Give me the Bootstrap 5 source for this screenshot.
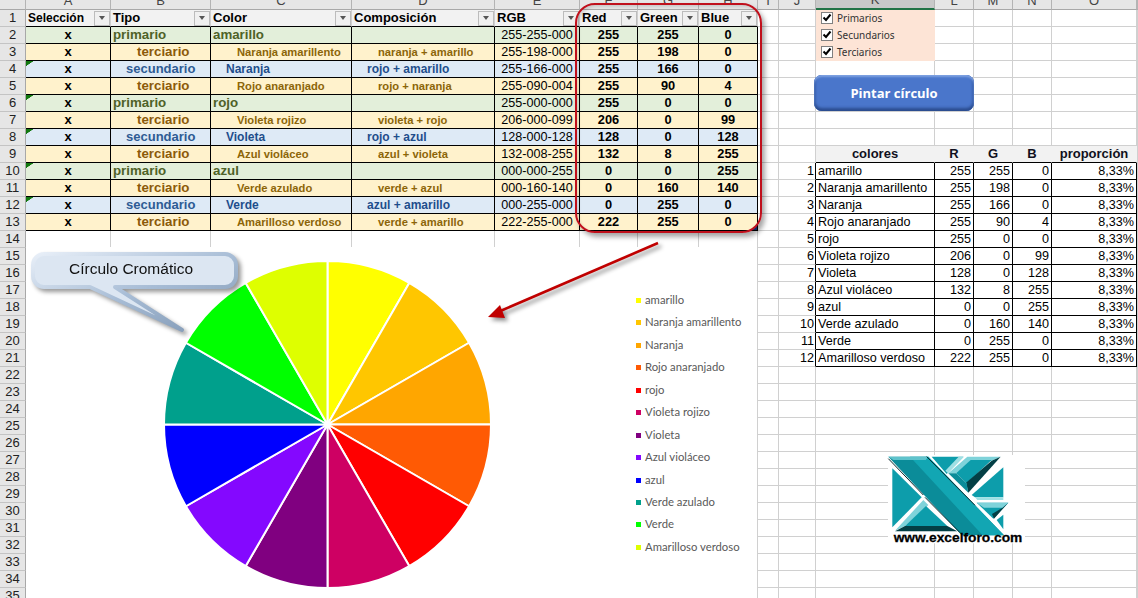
<!DOCTYPE html>
<html lang="es">
<head>
<meta charset="utf-8">
<title>Círculo Cromático</title>
<link href="https://cdn.jsdelivr.net/npm/bootstrap@5.3.0/dist/css/bootstrap.min.css" rel="stylesheet">
<style>
html,body{margin:0;background:#fff;overflow:hidden}
.xl-stage{position:relative;width:1138px;height:598px;overflow:hidden;font-family:"Liberation Sans",Arial,sans-serif;font-size:12.6px;color:#000}
.xl-sheet{table-layout:fixed;width:1138px;margin-top:-8px;border-collapse:separate;border-spacing:0}
.xl-sheet th,.xl-sheet td{height:17px;padding:0 2px;line-height:16px;white-space:nowrap;overflow:hidden;border-right:1px solid #d0d0d0;border-bottom:1px solid #d0d0d0;font-weight:400}
.xl-sheet thead th{background:#e6e6e6;text-align:center;color:#444;border-right-color:#b4b4b4;border-bottom-color:#a8a8a8;font-size:13px}
.xl-sheet thead th.xl-sel{background:#c9c9c9;border-bottom:2px solid #217346}
.xl-sheet tbody th{background:#e6e6e6;text-align:center;color:#222;border-right-color:#a8a8a8;border-bottom-color:#c4c4c4;padding:0;font-size:13px}
.xl-sheet td.xl-head{background:#f2f2f2;font-size:13px;font-weight:700;border-bottom-color:#000;border-right-color:#cfcfcf;padding:0 0 0 2px}
.xl-sheet td.xl-head.xl-tight{font-size:12px}
.xl-filt{display:inline-flex;align-items:center;justify-content:center;width:16px;height:15px;background:#f0f0f0;border:1px solid #bcbcbc;flex:none}
.xl-filt::after{content:"";border:3.5px solid transparent;border-top:4px solid #555;border-bottom:0}
.xl-sheet td.xl-b{border-right-color:#000;border-bottom-color:#000}
.xl-prim{background:#e3efda}
.xl-sec{background:#deeaf6}
.xl-ter{background:#fff2cc}
.xl-sheet td.xl-a{font-weight:700;text-align:center;font-size:13px}
.xl-sheet td.xl-num{text-align:center;font-weight:700;font-size:12.8px}
.xl-sheet td.xl-t{font-weight:700}
.xl-sheet td.xl-c{font-weight:700}
.xl-prim.xl-t{color:#4f6228;font-size:13.3px}
.xl-sec.xl-t{color:#2e5b94;font-size:13px}
.xl-ter.xl-t{color:#8c5a09;font-size:13.3px}
.xl-sec.xl-c{color:#1f4e8c;font-size:12px}
.xl-ter.xl-c{color:#8c6508;font-size:11.2px}
.xl-sheet td.xl-i1{padding-left:15px}
.xl-sheet td.xl-i2{padding-left:27px}
.xl-sheet td.xl-ter.xl-i2{padding-left:26px}
.xl-err{background-image:linear-gradient(146deg,#12780f 4px,transparent 4.5px)}
.xl-corner{background-image:linear-gradient(315deg,#1f3a93 3px,transparent 3px)}
.xl-sheet td.xl-peach{background:#fde4d6;border-color:#fde4d6;padding:0 0 0 5px;vertical-align:top;font-family:"Noto Sans",sans-serif;font-size:10px;color:#333}
.xl-peach>div{height:14px;margin-top:1px}
.xl-check.form-check-input{width:12px;height:12px;margin:0;border:1px solid #808080;border-radius:0;background-color:#fff;box-shadow:none;flex:none}
.xl-check.form-check-input:checked{background-color:#fff;border-color:#808080;background-image:url("data:image/svg+xml,%3csvg xmlns='http://www.w3.org/2000/svg' viewBox='0 0 12 12'%3e%3cpath fill='none' stroke='%23000' stroke-width='2' d='M2.5 5.5l2.5 2.5 4.5-5.5'/%3e%3c/svg%3e");background-size:12px 12px}
.xl-sheet td.xl-band{background:#f2f2f2;font-weight:700;text-align:center;border-right-color:#f2f2f2;border-bottom-color:#000;color:#101020;font-size:13px;padding:0}
.xl-sheet td.xl-idx{text-align:right;border-right-color:#000;padding-right:1px}
.xl-sheet td.xl-cell{border-right-color:#000;border-bottom-color:#000}
.xl-sheet td.xl-cell.xl-r{text-align:right}
.xl-frame{position:absolute;left:575px;top:3px;width:187px;height:230px;border:2px solid #c0101c;border-radius:20px;box-shadow:3px 4px 5px rgba(0,0,0,.35),inset 2px 2px 3px rgba(0,0,0,.12)}
.xl-arrow{position:absolute;left:480px;top:235px;filter:drop-shadow(3px 3px 2px rgba(0,0,0,.45))}
.xl-paint.btn{position:absolute;left:814px;top:75px;width:160px;height:36px;padding:0;border:0;border-radius:8px;background:#4a76cb;color:#fff;font:700 13px "Open Sans",sans-serif;box-shadow:inset 0 2px 2px #7fa2e2,inset 0 -3px 3px #2b4c8f,inset 2px 0 2px #3f68b6,inset -2px 0 2px #3f68b6}
.xl-chart{position:absolute;left:26px;top:247px;width:731px;height:351px;background:#fff}
.xl-pie{margin:14px 0 0 138px;flex:none}
.xl-legend{margin:42px 0 0 145px;font-family:Lato,sans-serif;font-size:11.3px;color:#595959}
.xl-legend li{height:22.45px;line-height:22.45px;white-space:nowrap}
.xl-dot{display:inline-block;width:5px;height:5px;margin-right:4px;vertical-align:1px}
.xl-callout{position:absolute;left:0;top:-1px;filter:drop-shadow(3px 3px 2px rgba(0,0,0,.4))}
.xl-callout text{font-family:"Liberation Sans",sans-serif;font-size:15.5px;fill:#111}
.xl-logo{position:absolute;left:860px;top:440px}
.xl-logo text{font-family:"Liberation Sans",sans-serif;font-weight:700;font-size:38.5px;fill:#000;stroke:#000;stroke-width:.8}
</style>
</head>
<body>
<div class="xl-stage">
<table class="xl-sheet">
<colgroup><col style="width:26px"><col style="width:85px"><col style="width:100px"><col style="width:141px"><col style="width:143px"><col style="width:85px"><col style="width:58px"><col style="width:61px"><col style="width:59px"><col style="width:21px"><col style="width:37px"><col style="width:119px"><col style="width:39px"><col style="width:39px"><col style="width:39px"><col style="width:85px"><col style="width:1px"></colgroup>
<thead><tr><th></th><th>A</th><th>B</th><th>C</th><th>D</th><th>E</th><th>F</th><th>G</th><th>H</th><th>I</th><th>J</th><th class="xl-sel">K</th><th>L</th><th>M</th><th>N</th><th>O</th><th></th></tr></thead>
<tbody>
<tr><th>1</th>
<td class="xl-head xl-tight"><div class="d-flex justify-content-between align-items-center">Selección<span class="xl-filt"></span></div></td>
<td class="xl-head"><div class="d-flex justify-content-between align-items-center">Tipo<span class="xl-filt"></span></div></td>
<td class="xl-head"><div class="d-flex justify-content-between align-items-center">Color<span class="xl-filt"></span></div></td>
<td class="xl-head"><div class="d-flex justify-content-between align-items-center">Composición<span class="xl-filt"></span></div></td>
<td class="xl-head"><div class="d-flex justify-content-between align-items-center">RGB<span class="xl-filt"></span></div></td>
<td class="xl-head"><div class="d-flex justify-content-between align-items-center">Red<span class="xl-filt"></span></div></td>
<td class="xl-head"><div class="d-flex justify-content-between align-items-center">Green<span class="xl-filt"></span></div></td>
<td class="xl-head"><div class="d-flex justify-content-between align-items-center">Blue<span class="xl-filt"></span></div></td>
<td></td><td></td>
<td class="xl-peach"><div class="d-flex align-items-center gap-1"><input class="form-check-input xl-check" type="checkbox" checked aria-label="Primarios">Primarios</div></td>
<td></td><td></td><td></td><td></td><td></td></tr>
<tr><th>2</th><td class="xl-b xl-prim xl-a">x</td><td class="xl-b xl-prim xl-t">primario</td><td class="xl-b xl-prim xl-t">amarillo</td><td class="xl-b xl-prim"></td><td class="xl-b xl-prim text-center">255-255-000</td><td class="xl-b xl-prim xl-num">255</td><td class="xl-b xl-prim xl-num">255</td><td class="xl-b xl-prim xl-num">0</td><td></td><td></td>
<td class="xl-peach"><div class="d-flex align-items-center gap-1"><input class="form-check-input xl-check" type="checkbox" checked aria-label="Secundarios">Secundarios</div></td>
<td></td><td></td><td></td><td></td><td></td></tr>
<tr><th>3</th><td class="xl-b xl-ter xl-a">x</td><td class="xl-b xl-ter xl-t xl-i2">terciario</td><td class="xl-b xl-ter xl-c xl-i2">Naranja amarillento</td><td class="xl-b xl-ter xl-c xl-i2">naranja + amarillo</td><td class="xl-b xl-ter text-center">255-198-000</td><td class="xl-b xl-ter xl-num">255</td><td class="xl-b xl-ter xl-num">198</td><td class="xl-b xl-ter xl-num">0</td><td></td><td></td>
<td class="xl-peach"><div class="d-flex align-items-center gap-1"><input class="form-check-input xl-check" type="checkbox" checked aria-label="Terciarios">Terciarios</div></td>
<td></td><td></td><td></td><td></td><td></td></tr>
<tr><th>4</th><td class="xl-b xl-sec xl-a xl-err">x</td><td class="xl-b xl-sec xl-t xl-i1">secundario</td><td class="xl-b xl-sec xl-c xl-i1">Naranja</td><td class="xl-b xl-sec xl-c xl-i1">rojo + amarillo</td><td class="xl-b xl-sec text-center">255-166-000</td><td class="xl-b xl-sec xl-num">255</td><td class="xl-b xl-sec xl-num">166</td><td class="xl-b xl-sec xl-num">0</td><td></td><td></td><td></td><td></td><td></td><td></td><td></td><td></td></tr>
<tr><th>5</th><td class="xl-b xl-ter xl-a">x</td><td class="xl-b xl-ter xl-t xl-i2">terciario</td><td class="xl-b xl-ter xl-c xl-i2">Rojo anaranjado</td><td class="xl-b xl-ter xl-c xl-i2">rojo + naranja</td><td class="xl-b xl-ter text-center">255-090-004</td><td class="xl-b xl-ter xl-num">255</td><td class="xl-b xl-ter xl-num">90</td><td class="xl-b xl-ter xl-num">4</td><td></td><td></td><td></td><td></td><td></td><td></td><td></td><td></td></tr>
<tr><th>6</th><td class="xl-b xl-prim xl-a xl-err">x</td><td class="xl-b xl-prim xl-t">primario</td><td class="xl-b xl-prim xl-t">rojo</td><td class="xl-b xl-prim"></td><td class="xl-b xl-prim text-center">255-000-000</td><td class="xl-b xl-prim xl-num">255</td><td class="xl-b xl-prim xl-num">0</td><td class="xl-b xl-prim xl-num">0</td><td></td><td></td><td></td><td></td><td></td><td></td><td></td><td></td></tr>
<tr><th>7</th><td class="xl-b xl-ter xl-a">x</td><td class="xl-b xl-ter xl-t xl-i2">terciario</td><td class="xl-b xl-ter xl-c xl-i2">Violeta rojizo</td><td class="xl-b xl-ter xl-c xl-i2">violeta + rojo</td><td class="xl-b xl-ter text-center">206-000-099</td><td class="xl-b xl-ter xl-num">206</td><td class="xl-b xl-ter xl-num">0</td><td class="xl-b xl-ter xl-num">99</td><td></td><td></td><td></td><td></td><td></td><td></td><td></td><td></td></tr>
<tr><th>8</th><td class="xl-b xl-sec xl-a xl-err">x</td><td class="xl-b xl-sec xl-t xl-i1">secundario</td><td class="xl-b xl-sec xl-c xl-i1">Violeta</td><td class="xl-b xl-sec xl-c xl-i1">rojo + azul</td><td class="xl-b xl-sec text-center">128-000-128</td><td class="xl-b xl-sec xl-num">128</td><td class="xl-b xl-sec xl-num">0</td><td class="xl-b xl-sec xl-num">128</td><td></td><td></td><td></td><td></td><td></td><td></td><td></td><td></td></tr>
<tr><th>9</th><td class="xl-b xl-ter xl-a">x</td><td class="xl-b xl-ter xl-t xl-i2">terciario</td><td class="xl-b xl-ter xl-c xl-i2">Azul violáceo</td><td class="xl-b xl-ter xl-c xl-i2">azul + violeta</td><td class="xl-b xl-ter text-center">132-008-255</td><td class="xl-b xl-ter xl-num">132</td><td class="xl-b xl-ter xl-num">8</td><td class="xl-b xl-ter xl-num">255</td><td></td><td></td><td class="xl-band">colores</td><td class="xl-band">R</td><td class="xl-band">G</td><td class="xl-band">B</td><td class="xl-band">proporción</td><td></td></tr>
<tr><th>10</th><td class="xl-b xl-prim xl-a xl-err">x</td><td class="xl-b xl-prim xl-t">primario</td><td class="xl-b xl-prim xl-t">azul</td><td class="xl-b xl-prim"></td><td class="xl-b xl-prim text-center">000-000-255</td><td class="xl-b xl-prim xl-num">0</td><td class="xl-b xl-prim xl-num">0</td><td class="xl-b xl-prim xl-num">255</td><td></td><td class="xl-idx">1</td><td class="xl-cell">amarillo</td><td class="xl-cell xl-r">255</td><td class="xl-cell xl-r">255</td><td class="xl-cell xl-r">0</td><td class="xl-cell xl-r">8,33%</td><td></td></tr>
<tr><th>11</th><td class="xl-b xl-ter xl-a">x</td><td class="xl-b xl-ter xl-t xl-i2">terciario</td><td class="xl-b xl-ter xl-c xl-i2">Verde azulado</td><td class="xl-b xl-ter xl-c xl-i2">verde + azul</td><td class="xl-b xl-ter text-center">000-160-140</td><td class="xl-b xl-ter xl-num">0</td><td class="xl-b xl-ter xl-num">160</td><td class="xl-b xl-ter xl-num">140</td><td></td><td class="xl-idx">2</td><td class="xl-cell">Naranja amarillento</td><td class="xl-cell xl-r">255</td><td class="xl-cell xl-r">198</td><td class="xl-cell xl-r">0</td><td class="xl-cell xl-r">8,33%</td><td></td></tr>
<tr><th>12</th><td class="xl-b xl-sec xl-a xl-err">x</td><td class="xl-b xl-sec xl-t xl-i1">secundario</td><td class="xl-b xl-sec xl-c xl-i1">Verde</td><td class="xl-b xl-sec xl-c xl-i1">azul + amarillo</td><td class="xl-b xl-sec text-center">000-255-000</td><td class="xl-b xl-sec xl-num">0</td><td class="xl-b xl-sec xl-num">255</td><td class="xl-b xl-sec xl-num">0</td><td></td><td class="xl-idx">3</td><td class="xl-cell">Naranja</td><td class="xl-cell xl-r">255</td><td class="xl-cell xl-r">166</td><td class="xl-cell xl-r">0</td><td class="xl-cell xl-r">8,33%</td><td></td></tr>
<tr><th>13</th><td class="xl-b xl-ter xl-a">x</td><td class="xl-b xl-ter xl-t xl-i2">terciario</td><td class="xl-b xl-ter xl-c xl-i2">Amarilloso verdoso</td><td class="xl-b xl-ter xl-c xl-i2">verde + amarillo</td><td class="xl-b xl-ter text-center">222-255-000</td><td class="xl-b xl-ter xl-num">222</td><td class="xl-b xl-ter xl-num">255</td><td class="xl-b xl-ter xl-num xl-corner">0</td><td></td><td class="xl-idx">4</td><td class="xl-cell">Rojo anaranjado</td><td class="xl-cell xl-r">255</td><td class="xl-cell xl-r">90</td><td class="xl-cell xl-r">4</td><td class="xl-cell xl-r">8,33%</td><td></td></tr>
<tr><th>14</th><td></td><td></td><td></td><td></td><td></td><td></td><td></td><td></td><td></td><td class="xl-idx">5</td><td class="xl-cell">rojo</td><td class="xl-cell xl-r">255</td><td class="xl-cell xl-r">0</td><td class="xl-cell xl-r">0</td><td class="xl-cell xl-r">8,33%</td><td></td></tr>
<tr><th>15</th><td></td><td></td><td></td><td></td><td></td><td></td><td></td><td></td><td></td><td class="xl-idx">6</td><td class="xl-cell">Violeta rojizo</td><td class="xl-cell xl-r">206</td><td class="xl-cell xl-r">0</td><td class="xl-cell xl-r">99</td><td class="xl-cell xl-r">8,33%</td><td></td></tr>
<tr><th>16</th><td></td><td></td><td></td><td></td><td></td><td></td><td></td><td></td><td></td><td class="xl-idx">7</td><td class="xl-cell">Violeta</td><td class="xl-cell xl-r">128</td><td class="xl-cell xl-r">0</td><td class="xl-cell xl-r">128</td><td class="xl-cell xl-r">8,33%</td><td></td></tr>
<tr><th>17</th><td></td><td></td><td></td><td></td><td></td><td></td><td></td><td></td><td></td><td class="xl-idx">8</td><td class="xl-cell">Azul violáceo</td><td class="xl-cell xl-r">132</td><td class="xl-cell xl-r">8</td><td class="xl-cell xl-r">255</td><td class="xl-cell xl-r">8,33%</td><td></td></tr>
<tr><th>18</th><td></td><td></td><td></td><td></td><td></td><td></td><td></td><td></td><td></td><td class="xl-idx">9</td><td class="xl-cell">azul</td><td class="xl-cell xl-r">0</td><td class="xl-cell xl-r">0</td><td class="xl-cell xl-r">255</td><td class="xl-cell xl-r">8,33%</td><td></td></tr>
<tr><th>19</th><td></td><td></td><td></td><td></td><td></td><td></td><td></td><td></td><td></td><td class="xl-idx">10</td><td class="xl-cell">Verde azulado</td><td class="xl-cell xl-r">0</td><td class="xl-cell xl-r">160</td><td class="xl-cell xl-r">140</td><td class="xl-cell xl-r">8,33%</td><td></td></tr>
<tr><th>20</th><td></td><td></td><td></td><td></td><td></td><td></td><td></td><td></td><td></td><td class="xl-idx">11</td><td class="xl-cell">Verde</td><td class="xl-cell xl-r">0</td><td class="xl-cell xl-r">255</td><td class="xl-cell xl-r">0</td><td class="xl-cell xl-r">8,33%</td><td></td></tr>
<tr><th>21</th><td></td><td></td><td></td><td></td><td></td><td></td><td></td><td></td><td></td><td class="xl-idx">12</td><td class="xl-cell">Amarilloso verdoso</td><td class="xl-cell xl-r">222</td><td class="xl-cell xl-r">255</td><td class="xl-cell xl-r">0</td><td class="xl-cell xl-r">8,33%</td><td></td></tr>
<tr><th>22</th><td></td><td></td><td></td><td></td><td></td><td></td><td></td><td></td><td></td><td></td><td></td><td></td><td></td><td></td><td></td><td></td></tr>
<tr><th>23</th><td></td><td></td><td></td><td></td><td></td><td></td><td></td><td></td><td></td><td></td><td></td><td></td><td></td><td></td><td></td><td></td></tr>
<tr><th>24</th><td></td><td></td><td></td><td></td><td></td><td></td><td></td><td></td><td></td><td></td><td></td><td></td><td></td><td></td><td></td><td></td></tr>
<tr><th>25</th><td></td><td></td><td></td><td></td><td></td><td></td><td></td><td></td><td></td><td></td><td></td><td></td><td></td><td></td><td></td><td></td></tr>
<tr><th>26</th><td></td><td></td><td></td><td></td><td></td><td></td><td></td><td></td><td></td><td></td><td></td><td></td><td></td><td></td><td></td><td></td></tr>
<tr><th>27</th><td></td><td></td><td></td><td></td><td></td><td></td><td></td><td></td><td></td><td></td><td></td><td></td><td></td><td></td><td></td><td></td></tr>
<tr><th>28</th><td></td><td></td><td></td><td></td><td></td><td></td><td></td><td></td><td></td><td></td><td></td><td></td><td></td><td></td><td></td><td></td></tr>
<tr><th>29</th><td></td><td></td><td></td><td></td><td></td><td></td><td></td><td></td><td></td><td></td><td></td><td></td><td></td><td></td><td></td><td></td></tr>
<tr><th>30</th><td></td><td></td><td></td><td></td><td></td><td></td><td></td><td></td><td></td><td></td><td></td><td></td><td></td><td></td><td></td><td></td></tr>
<tr><th>31</th><td></td><td></td><td></td><td></td><td></td><td></td><td></td><td></td><td></td><td></td><td></td><td></td><td></td><td></td><td></td><td></td></tr>
<tr><th>32</th><td></td><td></td><td></td><td></td><td></td><td></td><td></td><td></td><td></td><td></td><td></td><td></td><td></td><td></td><td></td><td></td></tr>
<tr><th>33</th><td></td><td></td><td></td><td></td><td></td><td></td><td></td><td></td><td></td><td></td><td></td><td></td><td></td><td></td><td></td><td></td></tr>
<tr><th>34</th><td></td><td></td><td></td><td></td><td></td><td></td><td></td><td></td><td></td><td></td><td></td><td></td><td></td><td></td><td></td><td></td></tr>
<tr><th>35</th><td></td><td></td><td></td><td></td><td></td><td></td><td></td><td></td><td></td><td></td><td></td><td></td><td></td><td></td><td></td><td></td></tr>
</tbody>
</table>

<div class="xl-frame"></div>
<button type="button" class="btn xl-paint">Pintar círculo</button>

<div class="xl-chart d-flex align-items-start">
  <svg class="xl-pie" width="327" height="327" viewBox="-163.5 -163.5 327 327" stroke="#fff" stroke-width="2" stroke-linejoin="round" role="img" aria-label="Círculo cromático">
    <path fill="#ffff00" d="M0 0L0 -163.5A163.5 163.5 0 0 1 81.75 -141.6Z"/>
    <path fill="#ffc600" d="M0 0L81.75 -141.6A163.5 163.5 0 0 1 141.6 -81.75Z"/>
    <path fill="#ffa600" d="M0 0L141.6 -81.75A163.5 163.5 0 0 1 163.5 0Z"/>
    <path fill="#ff5a04" d="M0 0L163.5 0A163.5 163.5 0 0 1 141.6 81.75Z"/>
    <path fill="#ff0000" d="M0 0L141.6 81.75A163.5 163.5 0 0 1 81.75 141.6Z"/>
    <path fill="#ce0063" d="M0 0L81.75 141.6A163.5 163.5 0 0 1 0 163.5Z"/>
    <path fill="#800080" d="M0 0L0 163.5A163.5 163.5 0 0 1 -81.75 141.6Z"/>
    <path fill="#8408ff" d="M0 0L-81.75 141.6A163.5 163.5 0 0 1 -141.6 81.75Z"/>
    <path fill="#0000ff" d="M0 0L-141.6 81.75A163.5 163.5 0 0 1 -163.5 0Z"/>
    <path fill="#00a08c" d="M0 0L-163.5 0A163.5 163.5 0 0 1 -141.6 -81.75Z"/>
    <path fill="#00ff00" d="M0 0L-141.6 -81.75A163.5 163.5 0 0 1 -81.75 -141.6Z"/>
    <path fill="#deff00" d="M0 0L-81.75 -141.6A163.5 163.5 0 0 1 0 -163.5Z"/>
  </svg>
  <ul class="list-unstyled xl-legend">
    <li><span class="xl-dot" style="background:#ffff00"></span>amarillo</li>
    <li><span class="xl-dot" style="background:#ffc600"></span>Naranja amarillento</li>
    <li><span class="xl-dot" style="background:#ffa600"></span>Naranja</li>
    <li><span class="xl-dot" style="background:#ff5a04"></span>Rojo anaranjado</li>
    <li><span class="xl-dot" style="background:#ff0000"></span>rojo</li>
    <li><span class="xl-dot" style="background:#ce0063"></span>Violeta rojizo</li>
    <li><span class="xl-dot" style="background:#800080"></span>Violeta</li>
    <li><span class="xl-dot" style="background:#8408ff"></span>Azul violáceo</li>
    <li><span class="xl-dot" style="background:#0000ff"></span>azul</li>
    <li><span class="xl-dot" style="background:#00a08c"></span>Verde azulado</li>
    <li><span class="xl-dot" style="background:#00ff00"></span>Verde</li>
    <li><span class="xl-dot" style="background:#deff00"></span>Amarilloso verdoso</li>
  </ul>
  <svg class="xl-callout" width="230" height="100" viewBox="0 0 230 100">
    <defs><linearGradient id="xlEdge" x1="0" y1="0" x2="1" y2="1"><stop offset="0" stop-color="#e8eff8"/><stop offset=".5" stop-color="#a8bdd6"/><stop offset="1" stop-color="#7f97b3"/></linearGradient></defs>
    <path fill="#dce6f2" stroke="url(#xlEdge)" stroke-width="4" stroke-linejoin="round" d="M18 8H199A11 11 0 0 1 210 19V30A11 11 0 0 1 199 41H89L156 84L64 41H18A11 11 0 0 1 7 30V19A11 11 0 0 1 18 8Z"/>
    <text x="105" y="28" text-anchor="middle">Círculo Cromático</text>
  </svg>
</div>

<svg class="xl-arrow" width="190" height="95" viewBox="0 0 190 95" role="img" aria-label="Flecha">
  <path d="M178 8L18 77" stroke="#c00000" stroke-width="2.6" fill="none"/>
  <path d="M8 82L20 70L25 83Z" fill="#c00000"/>
</svg>

<svg class="xl-logo" width="200" height="120" viewBox="0 0 600 360" role="img" aria-label="excelforo">
  <rect x="84" y="45" width="411" height="265" fill="#fff"/>
  <path fill="#0d9dab" d="M97 85L185 172L97 262Z"/>
  <path fill="#7fd3da" d="M105 272L190 180L205 195L135 258Z"/>
  <path fill="#0d9dab" d="M135 258L198 198L262 258Z"/>
  <path fill="#033f45" d="M105 274L135 258H262L292 274Z"/>
  <path fill="#0b8c99" d="M85 50H205L432 286H305Z"/>
  <path fill="#12a6b3" d="M150 50H205L432 286H368Z"/>
  <path fill="#5fc3cc" d="M85 50H205L197 60H100Z"/>
  <path fill="none" stroke="#0a2a2e" stroke-width="3" d="M85 56L190 165M200 50L345 196M195 172L300 278"/>
  <path fill="#0d9dab" d="M215 50H310L260 102Z"/>
  <path fill="#9fe0e4" d="M296 50H312L264 100L256 92Z"/>
  <path fill="#7fd3da" d="M322 50H422L395 62H332L288 100H265Z"/>
  <path fill="#0d9dab" d="M332 60H395L320 130L288 100Z"/>
  <path fill="#033f45" d="M422 50L325 158L318 128L395 62Z"/>
  <path fill="#0b8c99" d="M265 100L288 100L320 130L325 158Z"/>
  <path fill="#0d9dab" d="M335 165L430 82V172H345Z"/>
  <path fill="#9fe0e4" d="M345 172H430V180H352Z"/>
  <path fill="#0d9dab" d="M350 188H445L400 236Z"/>
  <path fill="#7fd3da" d="M350 188H445L428 203H372Z"/>
  <path fill="#033f45" d="M445 188L402 236L396 222L428 203Z"/>
  <path fill="#0d9dab" d="M410 240L430 224V268Z"/>
  <text x="101" y="306" textLength="386" lengthAdjust="spacingAndGlyphs">www.excelforo.com</text>
</svg>
</div>
<script src="https://cdn.jsdelivr.net/npm/bootstrap@5.3.0/dist/js/bootstrap.bundle.min.js"></script>
</body>
</html>
